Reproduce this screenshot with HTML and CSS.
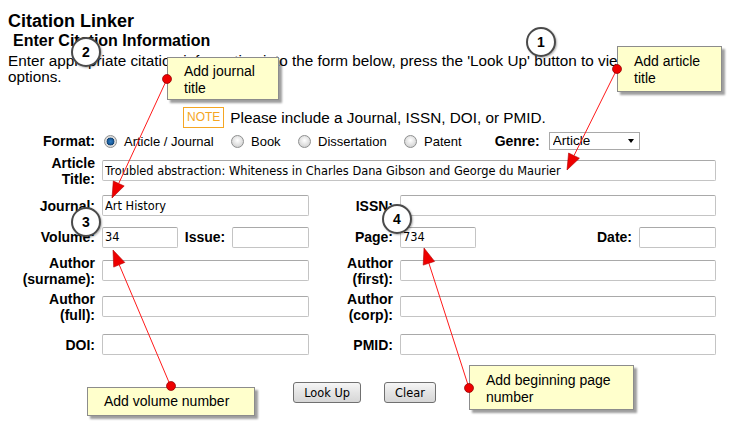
FILE: index.html
```html
<!DOCTYPE html>
<html>
<head>
<meta charset="utf-8">
<title>Citation Linker</title>
<link rel="stylesheet" href="styles.css">
</head>
<body>
<div class="page">
  <h1 class="title">Citation Linker</h1>
  <h2 class="subtitle">Enter Citation Information</h2>
  <p class="intro">Enter appropriate citation information into the form below, press the 'Look Up' button to view your options.</p>
  <div class="note"><span class="note-badge">NOTE</span><span class="note-text">Please include a Journal, ISSN, DOI, or PMID.</span></div>

  <form class="form">
    <label class="lbl">Format:</label>
    <div class="formats span3">
      <label class="opt"><input class="radio" type="radio" name="fmt" checked><span>Article / Journal</span></label>
      <label class="opt"><input class="radio" type="radio" name="fmt"><span>Book</span></label>
      <label class="opt"><input class="radio" type="radio" name="fmt"><span>Dissertation</span></label>
      <label class="opt"><input class="radio" type="radio" name="fmt"><span>Patent</span></label>
      <span class="lbl genre">Genre:</span>
      <span class="select-wrap"><select class="select"><option>Article</option></select></span>
    </div>

    <label class="lbl">Article<br>Title:</label>
    <input class="field span3" value="Troubled abstraction: Whiteness in Charles Dana Gibson and George du Maurier">

    <label class="lbl">Journal:</label>
    <input class="field" value="Art History">
    <label class="lbl">ISSN:</label>
    <input class="field">

    <label class="lbl">Volume:</label>
    <div class="split">
      <input class="field vol" value="34">
      <span class="lbl">Issue:</span>
      <input class="field iss">
    </div>
    <label class="lbl">Page:</label>
    <div class="split">
      <input class="field vol" value="734">
      <span class="lbl date">Date:</span>
      <input class="field iss">
    </div>

    <label class="lbl">Author<br>(surname):</label>
    <input class="field">
    <label class="lbl">Author<br>(first):</label>
    <input class="field">

    <label class="lbl">Author<br>(full):</label>
    <input class="field">
    <label class="lbl">Author<br>(corp):</label>
    <input class="field">

    <label class="lbl">DOI:</label>
    <input class="field">
    <label class="lbl">PMID:</label>
    <input class="field">

    <div class="buttons span4">
      <button type="button" class="btn">Look Up</button>
      <button type="button" class="btn">Clear</button>
    </div>
  </form>

  <div class="callout c-journal">Add journal<br>title</div>
  <div class="callout c-article">Add article<br>title</div>
  <div class="callout c-volume">Add volume number</div>
  <div class="callout c-page">Add beginning page<br>number</div>

  <svg class="arrows" width="739" height="426" viewBox="0 0 739 426">
    <g stroke="#ff1a1a" stroke-width="1" fill="none">
      <line x1="167" y1="79" x2="118.7" y2="183.5"/>
      <line x1="617" y1="69" x2="574.0" y2="155.6"/>
      <line x1="171" y1="387" x2="119.2" y2="264.7"/>
      <line x1="469" y1="388" x2="428.9" y2="263.2"/>
    </g>
    <g fill="#ee0000" stroke="#b00000" stroke-width="0.6">
      <polygon points="112,198 124.2,186.0 113.3,181.0"/>
      <polygon points="567,170 579.4,158.2 568.6,153.0"/>
      <polygon points="113,250 124.8,262.4 113.7,267.1"/>
      <polygon points="424,248 434.6,261.4 423.2,265.1"/>
    </g>
    <g fill="#ee0000" stroke="#8a0000" stroke-width="0.7">
      <circle cx="167" cy="79" r="4.5"/>
      <circle cx="617" cy="69" r="4.5"/>
      <circle cx="171" cy="386" r="4.5"/>
      <circle cx="469" cy="388" r="4.5"/>
    </g>
  </svg>

  <div class="step s1">1</div>
  <div class="step s2">2</div>
  <div class="step s3">3</div>
  <div class="step s4">4</div>
</div>
</body>
</html>
```

FILE: styles.css
```css
html, body {
  margin: 0;
  padding: 0;
  background: #ffffff;
}

.page {
  position: relative;
  width: 739px;
  height: 426px;
  box-sizing: border-box;
  padding: 0 8px;
  overflow: hidden;
  font-family: "Liberation Sans", Arial, sans-serif;
  color: #000;
}

.title {
  margin: 11px 0 0;
  font-size: 18px;
  line-height: 20px;
  font-weight: bold;
}

.subtitle {
  margin: 0;
  padding-left: 5px;
  font-size: 16px;
  line-height: 19px;
  font-weight: bold;
}

.intro {
  margin: 3px 0 0;
  font-size: 15.3px;
  line-height: 16px;
  width: 708px;
}

.note {
  margin-top: 22px;
  height: 21px;
  display: flex;
  justify-content: flex-start;
  align-items: center;
  padding-left: 175px;
}

.note-badge {
  display: inline-block;
  box-sizing: border-box;
  height: 21px;
  line-height: 19px;
  padding: 0 3px;
  border: 1px solid #f5a623;
  color: #f5a623;
  font-size: 12px;
}

.note-text {
  margin-left: 6px;
  font-size: 15.3px;
  line-height: 21px;
}

.form {
  margin-top: 2px;
  display: grid;
  grid-template-columns: 87px 207px 77px 316px;
  grid-template-rows: 22px 37px 33px 30px 37px 35px 41px 55px;
  column-gap: 7px;
  align-items: center;
}

.lbl {
  font-size: 14px;
  line-height: 16px;
  font-weight: bold;
  text-align: right;
  white-space: nowrap;
}

.span3 { grid-column: 2 / span 3; }
.span4 { grid-column: 1 / span 4; }

.formats {
  display: flex;
  align-items: center;
  font-size: 13px;
  height: 20px;
}

.opt {
  display: flex;
  align-items: center;
  white-space: nowrap;
}

.opt + .opt { margin-left: 15.4px; }

.radio {
  -webkit-appearance: none;
  appearance: none;
  box-sizing: border-box;
  width: 13px;
  height: 13px;
  margin: 0 7px 0 2px;
  border-radius: 50%;
  border: 1px solid #8e8f8f;
  background: radial-gradient(circle at 50% 40%, #ffffff 0, #eeeeee 30%, #c6c6c6 100%);
}

.radio:checked {
  background: radial-gradient(circle at 50% 50%, #2d7cc4 0, #1b5d9c 2.6px, #0f3f6e 3.6px, #d8d8d8 4.2px, #eeeeee 100%);
}

.genre {
  margin-left: 33px;
}

.select-wrap {
  position: relative;
  margin-left: 9px;
  display: inline-block;
  height: 18px;
}

.select-wrap::after {
  content: "";
  position: absolute;
  right: 6px;
  top: 7px;
  border-left: 3.5px solid transparent;
  border-right: 3.5px solid transparent;
  border-top: 4px solid #000;
  pointer-events: none;
}

.select {
  -webkit-appearance: none;
  appearance: none;
  box-sizing: border-box;
  width: 91px;
  height: 18px;
  margin: 0;
  padding: 0 0 0 3px;
  border: 1px solid #a9a9a9;
  border-radius: 0;
  background: #fff;
  font-family: "Liberation Sans", Arial, sans-serif;
  font-size: 13.5px;
  line-height: 16px;
  color: #000;
}

.field {
  box-sizing: border-box;
  height: 21px;
  width: 100%;
  margin: 0;
  padding: 0 2px;
  border: 1px solid #c4c4c4;
  border-top-color: #a9a9a9;
  border-radius: 2px;
  background: #fff;
  font-family: "DejaVu Sans", Verdana, sans-serif;
  font-size: 11.4px;
  color: #000;
}

.split {
  display: flex;
  align-items: center;
  justify-content: space-between;
}

.split .vol { width: 76px; }
.split .iss { width: 77px; }

.split .date {
  margin-left: auto;
  margin-right: 7px;
}

.buttons {
  display: flex;
  justify-content: center;
  gap: 23px;
  padding-left: 5px;
}

.btn {
  box-sizing: border-box;
  height: 21px;
  padding: 0 10px;
  margin: 0;
  border: 1px solid #707070;
  border-radius: 3px;
  background: linear-gradient(#f6f6f6, #e4e4e4 50%, #d6d6d6);
  font-family: "DejaVu Sans", Verdana, sans-serif;
  font-size: 11.4px;
  color: #000;
}

.callout {
  position: absolute;
  z-index: 1;
  box-sizing: border-box;
  background: #ffffcc;
  border: 1px solid #8c8c8c;
  box-shadow: 3px 3px 2px rgba(0, 0, 0, 0.38);
  padding: 6px 8px 3px 16px;
  font-size: 14px;
  line-height: 17px;
  white-space: nowrap;
}

.c-journal { left: 167px; top: 57px; width: 112px; height: 43px; padding-top: 5px; }
.c-article { left: 617px; top: 46px; width: 105px; height: 46px; }
.c-volume  { left: 87px;  top: 387px; width: 168px; height: 29px; padding-top: 5px; }
.c-page    { left: 469px; top: 365px; width: 165px; height: 45px; }

.arrows {
  position: absolute;
  left: 0;
  top: 0;
  z-index: 2;
  pointer-events: none;
}

.step {
  position: absolute;
  z-index: 3;
  box-sizing: border-box;
  width: 30px;
  height: 30px;
  border: 2px solid #4a4a4a;
  border-radius: 50%;
  background: #ffffff;
  box-shadow: 1px 1px 2px rgba(0, 0, 0, 0.3);
  font-size: 14px;
  font-weight: bold;
  line-height: 26px;
  text-align: center;
}

.s1 { left: 526px; top: 27px; }
.s2 { left: 71px;  top: 37px; }
.s3 { left: 71px;  top: 207px; }
.s4 { left: 382px; top: 204px; }
```
